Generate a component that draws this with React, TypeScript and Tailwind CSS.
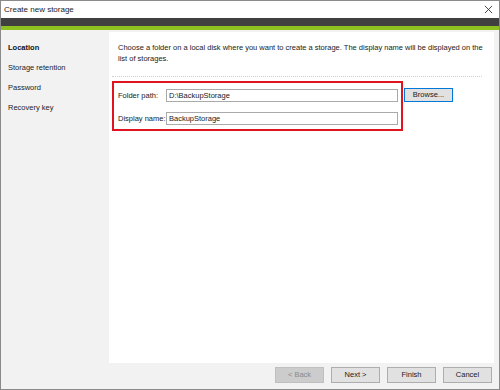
import React from 'react';

const font = { fontFamily: '"Liberation Sans", Arial, sans-serif' };

const steps = ['Location', 'Storage retention', 'Password', 'Recovery key'];

function Field({ label, value }: { label: string; value: string }) {
    return (
        <div className="flex items-center">
            <span className="w-[48px] shrink-0 whitespace-nowrap text-[7.5px] text-[#1a1a1a]">{label}</span>
            <div className="flex h-[13px] flex-1 items-center border border-[#aaaaaa] bg-white px-[2px] text-[7.5px] text-[#1a1a1a]">
                {value}
            </div>
        </div>
    );
}

function WizardButton({ label, disabled }: { label: string; disabled?: boolean }) {
    return (
        <button
            className={
                disabled
                    ? 'h-[16px] w-[49px] border border-[#bfbfbf] bg-[#cccccc] text-[7.5px] text-[#8a8a8a]'
                    : 'h-[16px] w-[49px] border border-[#adadad] bg-[#e1e1e1] text-[7.5px] text-[#1a1a1a]'
            }
        >
            {label}
        </button>
    );
}

export default function App() {
    return (
        <div style={font} className="flex h-[390px] w-[500px] flex-col border border-[#8a8a8a] bg-[#f2f2f2]">
            <div className="flex h-[17px] items-center justify-between bg-white pl-[3px] pr-[6px]">
                <span className="text-[8px] text-[#1a1a1a]">Create new storage</span>
                <svg width="9" height="9" viewBox="0 0 10 10">
                    <path d="M1 1 L9 9 M9 1 L1 9" stroke="#333" strokeWidth="1" />
                </svg>
            </div>
            <div className="h-[8px] bg-[#404040]" />
            <div className="h-[4px] bg-[#8cc11f]" />

            <div className="flex flex-1 pt-[2px]">
                <div className="flex w-[108px] shrink-0 flex-col gap-[9px] pl-[7px] pt-[10px]">
                    {steps.map((s, i) => (
                        <span
                            key={s}
                            className={i === 0 ? 'h-[11px] text-[7.5px] font-bold text-[#111]' : 'h-[11px] text-[7.5px] text-[#222]'}
                        >
                            {s}
                        </span>
                    ))}
                </div>

                <div className="mr-[5px] flex-1 bg-white pl-[3px] pt-[10px]">
                    <p className="pl-[6px] pr-[8px] text-[7.5px] leading-[11px] text-[#1a1a1a]">
                        Choose a folder on a local disk where you want to create a storage. The display name will be displayed on the
                        list of storages.
                    </p>
                    <div className="mr-[12px] mt-[12px] border-t border-dotted border-[#d0d0d0]" />
                    <div className="mt-[4px] flex items-start">
                        <div className="flex w-[291px] flex-col gap-[10px] border-2 border-[#e0141e] pb-[4px] pl-[4px] pr-[3px] pt-[6px]">
                            <Field label="Folder path:" value="D:\BackupStorage" />
                            <Field label="Display name:" value="BackupStorage" />
                        </div>
                        <button className="ml-[1px] mt-[7px] h-[14px] w-[49px] border border-[#0078d7] bg-[#e1e1e1] text-[7.5px] text-[#1a1a1a]">
                            Browse...
                        </button>
                    </div>
                </div>
            </div>

            <div className="flex h-[26px] items-start justify-end gap-[7px] pr-[7px] pt-[4px]">
                <WizardButton label="< Back" disabled />
                <WizardButton label="Next >" />
                <WizardButton label="Finish" />
                <WizardButton label="Cancel" />
            </div>
        </div>
    );
}
